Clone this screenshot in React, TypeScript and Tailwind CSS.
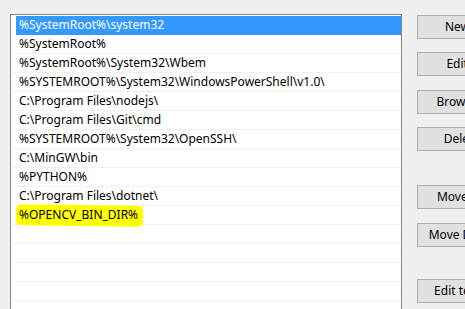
import React from 'react';

const paths = [
  '%SystemRoot%\\system32',
  '%SystemRoot%',
  '%SystemRoot%\\System32\\Wbem',
  '%SYSTEMROOT%\\System32\\WindowsPowerShell\\v1.0\\',
  'C:\\Program Files\\nodejs\\',
  'C:\\Program Files\\Git\\cmd',
  '%SYSTEMROOT%\\System32\\OpenSSH\\',
  'C:\\MinGW\\bin',
  '%PYTHON%',
  'C:\\Program Files\\dotnet\\',
  '%OPENCV_BIN_DIR%',
  '',
  '',
  '',
  '',
  '',
];

const buttons = [
  { label: 'New...', mt: 'mt-[15px]' },
  { label: 'Edit...', mt: 'mt-[13px]' },
  { label: 'Browse...', mt: 'mt-[14px]' },
  { label: 'Delete', mt: 'mt-[13px]' },
  { label: 'Move Up', mt: 'mt-[34px]' },
  { label: 'Move Down', mt: 'mt-[14px]' },
  { label: 'Edit text...', mt: 'mt-[32px]' },
];

export default function App() {
  return (
    <div
      className="w-[465px] h-[309px] overflow-hidden bg-[#f0f0f0] flex text-[12px] text-black"
      style={{ fontFamily: '"Noto Sans", "Liberation Sans", sans-serif' }}
    >
      {/* Path list */}
      <div className="ml-[10px] mt-[14px] w-[392px] h-[320px] shrink-0 border border-[#828790] bg-white pt-[1px] pl-[1px]">
        {paths.map((p, i) => {
          const selected = i === 0;
          const marked = p === '%OPENCV_BIN_DIR%';
          return (
            <div key={i} className="relative h-[19px] flex items-center">
              {!selected && <div className="absolute left-0 right-0 bottom-0 h-[1px] bg-[#f0f0f0]" />}
              {selected && <div className="absolute left-[4px] right-0 top-0 bottom-0 bg-[#3399ff]" />}
              {marked && (
                <div className="absolute left-[4px] top-[-1px] w-[127px] h-[21px] bg-[#ffff00] rounded-[5px] rotate-[0.8deg]" />
              )}
              <span className={`relative pl-[7px] leading-[18px] pb-[1px] whitespace-nowrap ${selected ? 'text-white' : ''}`}>
                {p}
              </span>
            </div>
          );
        })}
      </div>

      {/* Buttons */}
      <div className="ml-[15px] flex flex-col shrink-0">
        {buttons.map((b) => (
          <button
            key={b.label}
            className={`${b.mt} w-[90px] h-[24px] bg-[#e1e1e1] border border-[#adadad] text-center leading-[20px] whitespace-nowrap`}
          >
            {b.label}
          </button>
        ))}
      </div>
    </div>
  );
}
